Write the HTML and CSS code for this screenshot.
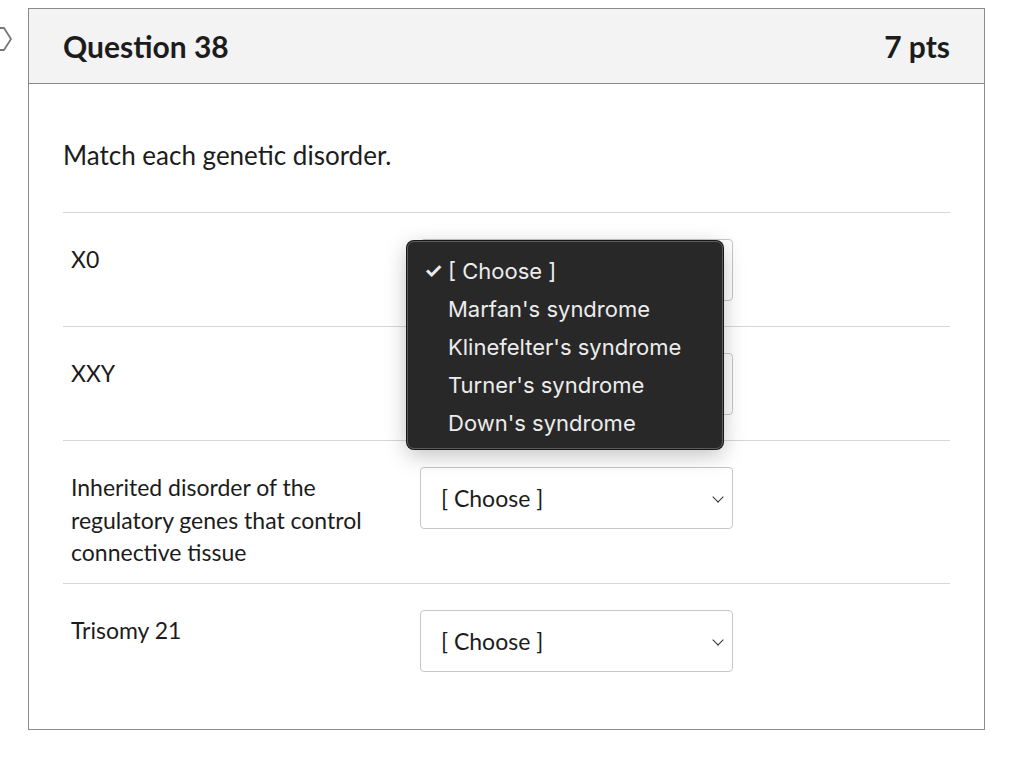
FILE: index.html
```html
<!DOCTYPE html>
<html lang="en">
<head>
  <meta charset="UTF-8">
  <title>Question 38</title>
  <link rel="stylesheet" href="styles.css">
</head>
<body>
  <svg class="flag" width="24" height="26" viewBox="0 0 24 26">
    <path d="M1 2 H15 L22 13 L15 24 H1 Z" fill="none" stroke="#777" stroke-width="1.8" stroke-linejoin="round"/>
  </svg>

  <div class="question">
    <div class="header">
      <h2>Question 38</h2>
      <span class="pts">7 pts</span>
    </div>

    <div class="body">
      <p class="text">Match each genetic disorder.</p>

      <div class="answers">
        <div class="row">
          <div class="label">X0</div>
          <div class="select">[ Choose ]<span class="chev"></span></div>
        </div>
        <div class="row">
          <div class="label">XXY</div>
          <div class="select">[ Choose ]<span class="chev"></span></div>
        </div>
        <div class="row">
          <div class="label">Inherited disorder of the regulatory genes that control connective tissue</div>
          <div class="select">[ Choose ]<span class="chev"></span></div>
        </div>
        <div class="row">
          <div class="label">Trisomy 21</div>
          <div class="select">[ Choose ]<span class="chev"></span></div>
        </div>
      </div>
    </div>

    <!-- open dropdown of the first select -->
    <ul class="menu">
      <li class="checked"><span class="tick">✓</span>[ Choose ]</li>
      <li>Marfan's syndrome</li>
      <li>Klinefelter's syndrome</li>
      <li>Turner's syndrome</li>
      <li>Down's syndrome</li>
    </ul>
  </div>
</body>
</html>
```

FILE: styles.css
```css
body { margin: 0; background: #fff; font-family: Lato, "Open Sans", sans-serif; color: #2d3b45; position: relative; }
.flag { position: absolute; left: -11px; top: 26px; }
.question { position: relative; margin: 8px 0 0 28px; width: 955px; border: 1px solid #8b8b8b; }
.header { display: flex; justify-content: space-between; align-items: center; height: 74px; padding: 0 34px; background: #f3f3f3; border-bottom: 1px solid #8b8b8b; }
.header h2 { margin: 0; font-size: 30px; font-weight: 700; color: #1c1c1c; }
.pts { font-size: 30px; font-weight: 700; color: #1c1c1c; }
.body { padding: 52px 34px 32px; }
.text { margin: 0 0 38px; font-size: 26px; line-height: 38px; color: #1c1c1c; }
.row { display: flex; border-top: 1px solid #d7d7d7; padding: 26px 0 14px; }
.label { width: 315px; padding: 4px 34px 0 8px; font-size: 23px; line-height: 32.5px; color: #1c1c1c; }
.select { position: relative; box-sizing: border-box; width: 313px; height: 62px; margin-bottom: 11px; padding: 0 20px; border: 1px solid #c4c8cc; border-radius: 4px; font-size: 23px; line-height: 60px; color: #1c1c1c; }
.chev { position: absolute; right: 10px; top: 25px; width: 7px; height: 7px; border-right: 1.5px solid #333; border-bottom: 1.5px solid #333; transform: rotate(45deg); }
.menu { position: absolute; left: 378px; top: 232px; box-sizing: border-box; width: 316px; height: 208px; margin: 0; padding: 10px 0 0; list-style: none; background: #282828; border: 1px solid #5c5c5c; border-radius: 7px; box-shadow: 0 6px 22px rgba(0,0,0,0.25), 0 0 0 1px #1a1a1a; font-family: Inter, "Noto Sans", sans-serif; font-size: 22px; color: #ececec; }
.menu li { height: 38px; line-height: 38px; padding-left: 40px; position: relative; }
.tick { position: absolute; left: 16px; font-size: 21px; font-weight: 700; }
```
